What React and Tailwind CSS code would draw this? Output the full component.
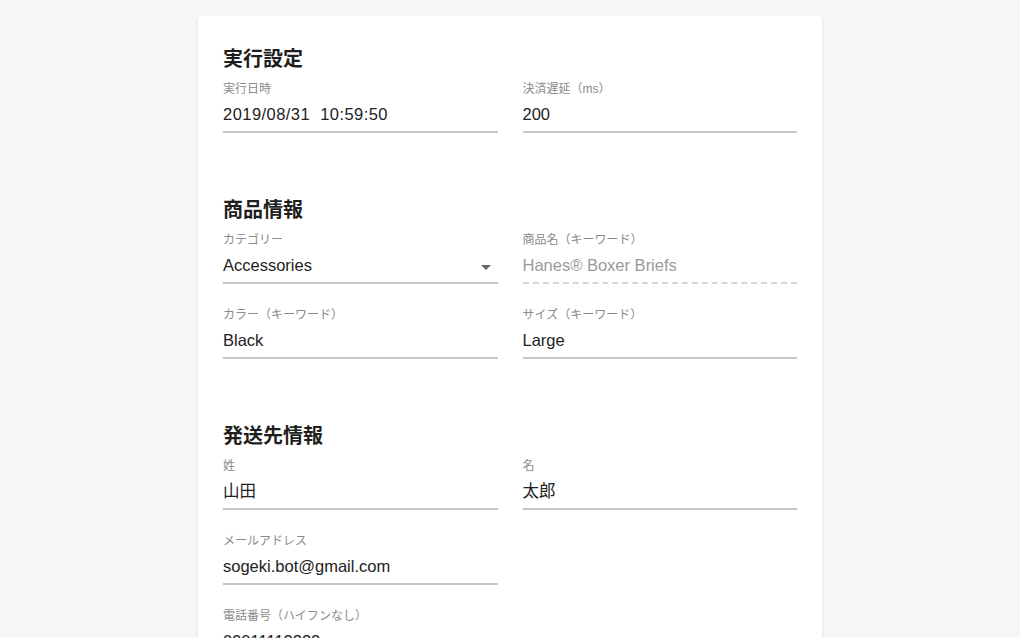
import React from 'react';

const font = { fontFamily: '"Liberation Sans", "Noto Sans CJK JP", sans-serif' };

function Field({ label, value, select = false, disabled = false, valueClass = '' }) {
  return (
    <div className="flex flex-col">
      <label className="text-[12px] leading-[16px] text-[#8a8a8a]">{label}</label>
      <div
        className={
          'relative mt-[6px] pb-[6px] border-b-2 ' +
          (disabled ? 'border-dashed border-[#d6d6d6]' : 'border-[#c6c6c6]')
        }
      >
        <div
          className={
            'text-[16.5px] leading-[22px] whitespace-pre ' +
            (disabled ? 'text-[#9a9a9a] ' : 'text-[#222] ') +
            valueClass
          }
        >
          {value}
        </div>
        {select && (
          <svg
            viewBox="0 0 24 24"
            className="absolute right-0 top-[1px] w-6 h-6 fill-[#666]"
          >
            <path d="M7 10l5 5 5-5z" />
          </svg>
        )}
      </div>
    </div>
  );
}

function Section({ title, children, first }) {
  return (
    <section className={first ? '' : 'mt-[65px]'}>
      <h2 className="text-[20px] leading-[24px] font-bold text-[#1e1e1e] mb-[10px]">
        {title}
      </h2>
      <div className="grid grid-cols-2 gap-x-[25px] gap-y-[23px]">{children}</div>
    </section>
  );
}

export default function App() {
  return (
    <main className="min-h-screen bg-[#f6f6f6] pt-4 pb-10" style={font}>
      <div className="ml-[198px] w-[624px] bg-white rounded shadow-[0_1px_3px_rgba(0,0,0,0.12),0_1px_1px_rgba(0,0,0,0.06)] px-[25px] pt-[31px] pb-10">
        {/* 実行設定 */}
        <Section title="実行設定" first>
          <Field label="実行日時" value="2019/08/31  10:59:50" valueClass="tracking-[0.45px]" />
          <Field label="決済遅延（ms）" value="200" />
        </Section>

        {/* 商品情報 */}
        <Section title="商品情報">
          <Field label="カテゴリー" value="Accessories" select />
          <Field label="商品名（キーワード）" value="Hanes® Boxer Briefs" disabled />
          <Field label="カラー（キーワード）" value="Black" />
          <Field label="サイズ（キーワード）" value="Large" />
        </Section>

        {/* 発送先情報 */}
        <Section title="発送先情報">
          <Field label="姓" value="山田" />
          <Field label="名" value="太郎" />
          <Field label="メールアドレス" value="sogeki.bot@gmail.com" />
          <div />
          <Field label="電話番号（ハイフンなし）" value="09011112222" />
          <div />
        </Section>
      </div>
    </main>
  );
}
